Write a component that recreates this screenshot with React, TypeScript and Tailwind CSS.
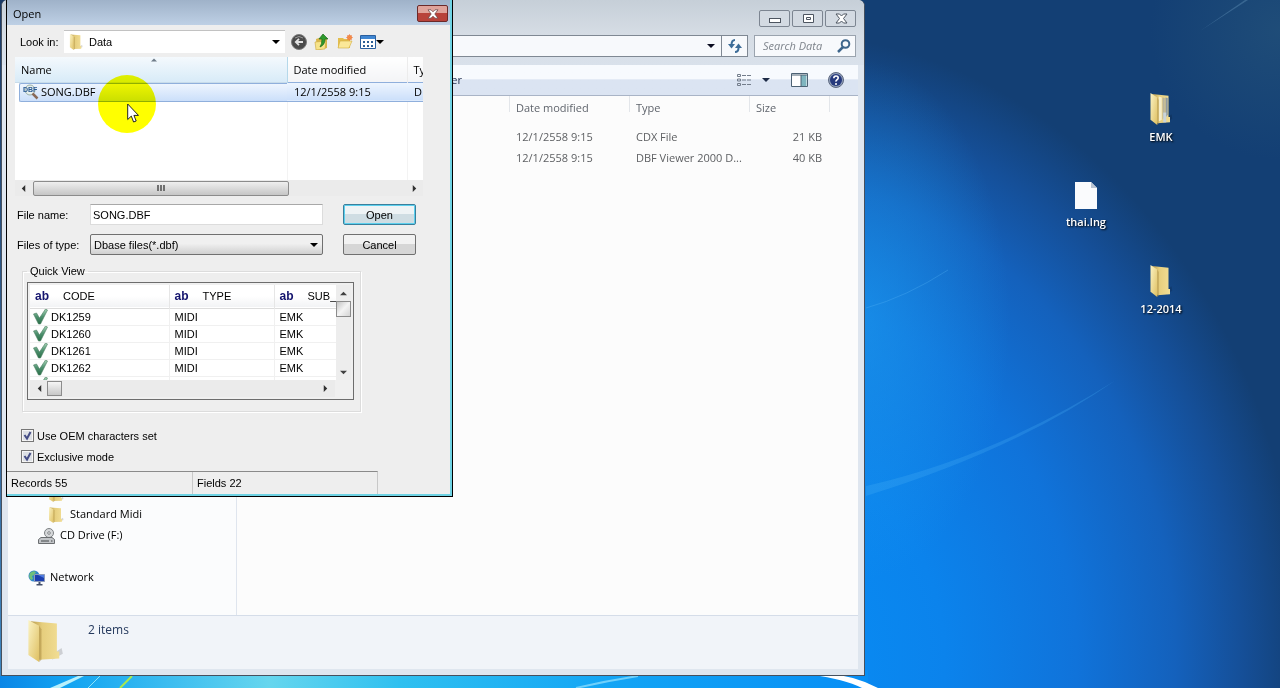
import { useState } from "react";
import type { ReactNode } from "react";
import clsx from "clsx";

const explorerFiles = [
  { modified: "12/1/2558 9:15", type: "CDX File", size: "21 KB" },
  { modified: "12/1/2558 9:15", type: "DBF Viewer 2000 D...", size: "40 KB" },
];

const records = ["DK1259", "DK1260", "DK1261", "DK1262"];

const sans = "font-['Liberation_Sans',Arial,sans-serif]";
const humanist = "font-['Open_Sans','Noto_Sans',sans-serif]";

type Direction = "up" | "down" | "left" | "right";

const arrowPaths: Record<Direction, string> = {
  up: "M0 6l4-4 4 4z",
  down: "M0 2l4 4 4-4z",
  left: "M6 0L2 4l4 4z",
  right: "M2 0l4 4-4 4z",
};

function Arrow({ direction, className }: { direction: Direction; className?: string }) {
  return (
    <svg viewBox="0 0 8 8" className={clsx("shrink-0", className)} aria-hidden="true">
      <path d={arrowPaths[direction]} fill="currentColor" />
    </svg>
  );
}

function FolderIcon({ className, full = false }: { className?: string; full?: boolean }) {
  return (
    <svg viewBox="0 0 32 36" preserveAspectRatio="none" className={clsx("shrink-0", className)} aria-hidden="true">
      <defs>
        <linearGradient id="folderFront" x1="0" y1="0" x2="1" y2="1">
          <stop offset="0" stopColor="#fbf3c4" />
          <stop offset="1" stopColor="#dfc062" />
        </linearGradient>
        <linearGradient id="folderBack" x1="0" y1="0" x2="1" y2="0">
          <stop offset="0" stopColor="#b99b4d" />
          <stop offset="0.4" stopColor="#e6ce7d" />
          <stop offset="1" stopColor="#f1dd94" />
        </linearGradient>
      </defs>
      <path d="M22 34l9-5-1-5-6 4z" fill="#000" opacity="0.15" />
      <path d="M4 1l22 2v24h2v6l-17 1z" fill="url(#folderBack)" />
      {full && (
        <>
          <path d="M13 4l4 1v25l-4 2z" fill="#f6eecb" />
          <path d="M18 5l3 .5v22l-3 2z" fill="#b9b49c" />
          <path d="M22 5l3 .5v19l-3 3z" fill="#8f9aa0" />
          <path d="M19 22h4v11h-4z" fill="#c9d4da" />
        </>
      )}
      <path d="M2 0l9 5v31l-9-6z" fill="url(#folderFront)" />
      <path d="M11 5v31l2-2V8z" fill="#a98b40" opacity="0.5" />
    </svg>
  );
}

function Wallpaper() {
  return (
    <svg
      viewBox="0 0 1280 688"
      preserveAspectRatio="none"
      className="absolute inset-0 size-full"
      aria-hidden="true"
    >
      <defs>
        <radialGradient id="sky" gradientUnits="userSpaceOnUse" cx="0" cy="0" r="1" gradientTransform="translate(780 660) scale(550 660)">
          <stop offset="0" stopColor="#078ef5" />
          <stop offset="0.3" stopColor="#0b83ec" />
          <stop offset="0.54" stopColor="#1073da" />
          <stop offset="0.72" stopColor="#1461bc" />
          <stop offset="0.84" stopColor="#154f98" />
          <stop offset="0.95" stopColor="#133f74" />
        </radialGradient>
        <radialGradient id="haze" gradientUnits="userSpaceOnUse" cx="0" cy="0" r="1" gradientTransform="translate(860 320) scale(150 260)">
          <stop offset="0" stopColor="#1c9cf0" stopOpacity="0.6" />
          <stop offset="1" stopColor="#1c9cf0" stopOpacity="0" />
        </radialGradient>
        <radialGradient id="corner" gradientUnits="userSpaceOnUse" cx="1280" cy="30" r="130">
          <stop offset="0" stopColor="#24527a" stopOpacity="0.7" />
          <stop offset="1" stopColor="#24527a" stopOpacity="0" />
        </radialGradient>
        <linearGradient id="horizon">
          <stop offset="0" stopColor="#0b86e6" />
          <stop offset="0.08" stopColor="#12a4f2" />
          <stop offset="0.31" stopColor="#66d6ee" />
          <stop offset="0.46" stopColor="#2fc0f0" />
          <stop offset="0.7" stopColor="#13a5f5" />
          <stop offset="1" stopColor="#078ef5" />
        </linearGradient>
        <linearGradient id="edge" x1="0" y1="0" x2="0" y2="1">
          <stop offset="0" stopColor="#1a3a66" />
          <stop offset="0.6" stopColor="#36679a" />
          <stop offset="1" stopColor="#3f86c0" />
        </linearGradient>
      </defs>
      <rect width="1280" height="688" fill="url(#sky)" />
      <rect x="860" width="160" height="600" fill="url(#haze)" />
      <rect x="1140" width="140" height="170" fill="url(#corner)" />
      <rect y="670" width="868" height="18" fill="url(#horizon)" />
      <rect width="8" height="676" fill="url(#edge)" />
      <path d="M1200 31l45-31h3z" fill="#7fb1d0" opacity="0.3" />
      <path d="M866 308q40-11 82-38" stroke="#58b6f4" strokeWidth="1" fill="none" opacity="0.3" />
      <path d="M866 486q130-30 250-106q-100 70-250 116z" fill="#4ab4f8" opacity="0.25" />
      <path d="M50 688l28-12h6l-24 12z" fill="#b8f0fb" />
      <path d="M88 688l12-12" stroke="#8fe4fa" strokeWidth="1" />
      <path d="M120 688l12-12" stroke="#a8e84e" strokeWidth="2" />
      <path d="M576 688q30-7 62-12" stroke="#6fd0fb" strokeWidth="2" fill="none" />
      <path d="M812 675q32 4 50 13h16q-26-14-50-13z" fill="#fff" />
    </svg>
  );
}

function DesktopIcon({ label, className, children }: { label: string; className: string; children: ReactNode }) {
  return (
    <button
      type="button"
      className={clsx(
        "absolute flex w-20 flex-col items-center gap-1 text-[11px] font-semibold text-white [text-shadow:1px_1px_2px_#000]",
        humanist,
        className
      )}
    >
      {children}
      <span className="leading-4">{label}</span>
    </button>
  );
}

function CaptionButton({ label, children }: { label: string; children: ReactNode }) {
  return (
    <button
      type="button"
      aria-label={label}
      className="flex h-[17px] w-[31px] items-center justify-center rounded-xs border border-[#7c8591] bg-[#d3dae2]"
    >
      <svg viewBox="0 0 14 11" className="h-[11px] w-[14px]" fill="#fff" stroke="#4d5560">
        {children}
      </svg>
    </button>
  );
}

function ColumnHeading({ children }: { children?: ReactNode }) {
  return (
    <th scope="col" className="font-normal">
      <div className="h-4 border-l border-[#e3e6ea] pl-1.5 leading-6">{children}</div>
    </th>
  );
}

function ExplorerWindow() {
  return (
    <section
      aria-label="Data"
      className={clsx(
        "absolute top-0 right-[415px] bottom-3 left-px flex flex-col rounded-t-md border border-t-0 border-[#46505e] bg-[#dfe6ef] px-1.5 pb-1.5 text-[11px]",
        humanist
      )}
    >
      <header className="-mx-1.5 flex h-[35px] shrink-0 items-start justify-end gap-0.5 rounded-t-md bg-linear-to-b from-[#c6cfd8] to-[#d6dde5] px-2 pt-2.5">
        <CaptionButton label="Minimize">
          <rect x="1.5" y="5.5" width="11" height="4" />
        </CaptionButton>
        <CaptionButton label="Maximize">
          <path d="M2.5 1.5h10v8h-10z" />
          <path d="M5.500 4.500h4v2h-4z" />
        </CaptionButton>
        <CaptionButton label="Close">
          <path d="M2 1h3.500l2 2 2-2H13L9.500 5.500 13 10H9.500l-2-2-2 2H2l3.500-4.500z" />
        </CaptionButton>
      </header>

      <div className="-mx-1.5 flex h-[30px] shrink-0 gap-1.5 bg-linear-to-b from-[#d6dde5] to-[#d9e1eb] pr-2 pl-1.5">
        <div className="flex h-[22px] grow border border-[#7f8893] bg-[#f7f9fc]">
          <button type="button" aria-label="Previous locations" className="ml-auto px-1.5 text-[#0a0c20]">
            <Arrow direction="down" className="size-2" />
          </button>
          <button type="button" aria-label="Refresh" className="flex w-[26px] items-center justify-center border-l border-[#7f8893]">
            <svg viewBox="0 0 16 14" className="h-3.5 w-4" fill="none" stroke="#3c6c98" strokeWidth="2">
              <path d="M8 1Q4.500 1 4.500 6" />
              <path d="M1 5h7L4.500 9.500z" fill="#3c6c98" stroke="none" />
              <path d="M8 13q3.500 0 3.500-4" />
              <path d="M8 9h7l-3.500-4.500z" fill="#3c6c98" stroke="none" />
            </svg>
          </button>
        </div>
        <label className="flex h-[22px] w-[102px] items-center border border-[#9aa3ae] bg-[#f7f9fc] pr-1 pl-2">
          <input
            type="search"
            aria-label="Search Data"
            placeholder="Search Data"
            className="w-full min-w-0 text-[11px] italic outline-none placeholder:text-[#7e848c]"
          />
          <svg viewBox="0 0 14 14" className="size-3.5 shrink-0" fill="none" stroke="#3e668c" strokeWidth="2">
            <circle cx="8.500" cy="5" r="3.800" />
            <path d="M6 8l-5 5" strokeWidth="2.500" />
          </svg>
        </label>
      </div>

      <div className="flex h-[31px] shrink-0 items-center border-b border-[#a9b4c6] bg-linear-to-b from-[#f7fafe] from-45% to-[#dbe4f2] to-50% text-[#1e2d4d]">
        <button type="button" className="w-[454px] text-right">
          New folder
        </button>
        <div className="ml-auto flex items-center pr-3.5">
          <button type="button" aria-label="Change your view" className="flex items-center gap-2.5">
            <svg viewBox="0 0 16 14" className="h-3.5 w-4" fill="none" stroke="#737d8b">
              <path d="M1.500 1.500h3v2h-3zM1.500 6h3v2h-3zM1.500 10.500h3v2h-3z" />
              <path d="M6 2.500h4M11 2.500h4M6 7h4M11 7h4M6 11.500h4M11 11.500h4" />
            </svg>
            <Arrow direction="down" className="size-2 text-[#1d2b46]" />
          </button>
          <button type="button" aria-label="Show the preview pane" className="ml-[21px]">
            <svg viewBox="0 0 17 14" className="h-3.5 w-[17px]">
              <path d="M.5.500h16v13H.5z" fill="#fff" stroke="#4d6274" />
              <path d="M10 2h5.500v11H10z" fill="#7fb5bf" />
              <path d="M1 2h15M10 2v11" stroke="#4d6274" />
            </svg>
          </button>
          <button type="button" aria-label="Get help" className="ml-5">
            <svg viewBox="0 0 16 16" className="size-4">
              <circle cx="8" cy="8" r="7.500" fill="#93a1ba" stroke="#5c6880" />
              <circle cx="8" cy="8" r="6" fill="#26397d" />
              <path d="M5.800 6.300Q5.800 4 8 4t2.200 2Q10.200 7 9 7.700T8 9.700" fill="none" stroke="#fff" strokeWidth="1.600" />
              <circle cx="8" cy="12" r="1" fill="#fff" />
            </svg>
          </button>
        </div>
      </div>

      <div className="flex min-h-0 grow">
        <nav className="flex w-[229px] shrink-0 flex-col justify-end border-r border-[#dfe5ee] bg-[#fbfcfd] pb-[27px] text-black">
          <a href="#mp3" className="flex h-[21px] items-center gap-1.5 pl-10">
            <FolderIcon className="h-4 w-4" />
            MP3
          </a>
          <a href="#standard-midi" className="flex h-[21px] items-center gap-1.5 pl-10">
            <FolderIcon className="h-4 w-4" />
            Standard Midi
          </a>
          <a href="#cd-drive" className="flex h-[21px] items-center gap-[5px] pl-[30px]">
            <svg viewBox="0 0 17 16" className="h-4 w-[17px]">
              <circle cx="11" cy="5" r="4.500" fill="#d6d8da" stroke="#7d8184" />
              <circle cx="11" cy="5" r="1.300" fill="#fff" stroke="#7d8184" />
              <path d="M3 9.500h11l2.500 2v4H.5v-4z" fill="#c2c5c8" stroke="#6b6e71" />
              <path d="M3 13h8M13 13h1.500" stroke="#44484b" />
            </svg>
            CD Drive (F:)
          </a>
          <a href="#network" className="mt-[21px] flex h-[21px] items-center gap-[5px] pl-5">
            <svg viewBox="0 0 17 16" className="h-4 w-[17px]">
              <circle cx="6" cy="6" r="5.500" fill="#2f86c8" />
              <path d="M2 3q3-3 6-1L6 5 4 6l1 3-2 1Q0 7 2 3z" fill="#6fc07a" />
              <path d="M6.500 4.500h10v7h-10z" fill="#1c3fb0" stroke="#8d9bb8" />
              <path d="M10 5h6v3z" fill="#4f7be0" />
              <path d="M10.500 12h2v2h2v1.500h-6V14h2z" fill="#44506c" />
            </svg>
            Network
          </a>
        </nav>

        <div className="grow bg-[#fcfcfc]">
          <table className="w-full table-fixed text-[#5e6063]">
            <colgroup>
              <col className="w-[272px]" />
              <col className="w-[120px]" />
              <col className="w-[120px]" />
              <col className="w-20" />
              <col />
            </colgroup>
            <thead>
              <tr className="h-[31px] text-left align-top text-[#60656d]">
                <th scope="col" aria-label="Name" />
                <ColumnHeading>Date modified</ColumnHeading>
                <ColumnHeading>Type</ColumnHeading>
                <ColumnHeading>Size</ColumnHeading>
                <ColumnHeading />
              </tr>
            </thead>
            <tbody>
              {explorerFiles.map((file) => (
                <tr key={file.type} className="h-[21px]">
                  <td />
                  <td className="pl-[7px]">{file.modified}</td>
                  <td className="pl-[7px] whitespace-nowrap">{file.type}</td>
                  <td className="pr-[7px] text-right">{file.size}</td>
                  <td />
                </tr>
              ))}
            </tbody>
          </table>
        </div>
      </div>

      <footer className="flex h-[54px] shrink-0 items-start gap-6 border-t border-[#d5dde9] bg-[#f1f4f9] pl-[18px] text-[#263a5e]">
        <FolderIcon className="mt-1 h-[42px] w-[38px]" />
        <p className="text-xs leading-7">2 items</p>
      </footer>
    </section>
  );
}

function CheckMark({ className }: { className?: string }) {
  return (
    <svg viewBox="0 0 16 16" className={clsx("shrink-0", className)} aria-hidden="true">
      <defs>
        <linearGradient id="tick" x1="0" y1="0" x2="0" y2="1">
          <stop offset="0" stopColor="#a6d3b6" />
          <stop offset="0.5" stopColor="#4f9270" />
          <stop offset="1" stopColor="#2a6f49" />
        </linearGradient>
      </defs>
      <path d="M1 5l3-1 3 5 6-9 2 1-7 14H6z" fill="url(#tick)" stroke="#4c7f62" strokeWidth="0.600" />
    </svg>
  );
}

function FieldHeader({ name, className }: { name: string; className?: string }) {
  return (
    <th scope="col" className={clsx("overflow-hidden font-normal whitespace-nowrap", className)}>
      <span className="mr-3.5 text-xs font-bold text-[#14146e]">ab</span>
      {name}
    </th>
  );
}

function QuickView() {
  return (
    <fieldset className="ml-[7px] w-[339px] border border-[#dcdcdc] pr-1.5 pb-[11px] pl-1 shadow-[1px_1px_#fff,inset_1px_1px_#fff]">
      <legend className="px-[3px] leading-[14px]">Quick View</legend>
      <div className="mt-1 border border-[#6d6d6d] bg-[#f0f0f0] p-0.5">
        <div className="flex">
          <div className="h-[95px] min-w-0 grow overflow-hidden bg-white">
            <table className="w-full table-fixed text-left">
              <colgroup>
                <col className="w-[139px]" />
                <col className="w-[105px]" />
                <col />
              </colgroup>
              <thead>
                <tr className="h-[23px] border-b border-[#dcdcdc] bg-linear-to-b from-white from-50% to-[#f2f3f5]">
                  <FieldHeader name="CODE" className="pl-[5px]" />
                  <FieldHeader name="TYPE" className="border-l border-[#e6e6e6] pl-[5px]" />
                  <FieldHeader name="SUB_" className="border-l border-[#e6e6e6] pl-[5px]" />
                </tr>
              </thead>
              <tbody>
                {records.map((code) => (
                  <tr key={code} className="h-[17px] border-b border-[#f0f0f0]">
                    <td className="pl-0.5">
                      <span className="flex h-4 items-center gap-0.5">
                        <CheckMark className="h-4 w-[17px]" />
                        {code}
                      </span>
                    </td>
                    <td className="border-l border-[#f0f0f0] pl-[5px]">MIDI</td>
                    <td className="border-l border-[#f0f0f0] pl-[5px]">EMK</td>
                  </tr>
                ))}
                <tr>
                  <td className="pl-0.5">
                    <CheckMark className="h-4 w-[17px]" />
                  </td>
                  <td className="border-l border-[#f0f0f0]" />
                  <td className="border-l border-[#f0f0f0]" />
                </tr>
              </tbody>
            </table>
          </div>
          <div className="flex w-4 flex-col items-center bg-[#ededed] pt-[5px] pb-1 text-[#404040]">
            <button type="button" aria-label="Scroll up">
              <Arrow direction="up" className="mb-1 size-[7px]" />
            </button>
            <div className="h-4 w-[15px] border border-[#8c8c8c] bg-linear-to-br from-[#c4c4c4] via-[#f4f4f4] to-[#d4d4d4]" />
            <button type="button" aria-label="Scroll down" className="mt-auto">
              <Arrow direction="down" className="size-[7px]" />
            </button>
          </div>
        </div>
        <div className="mr-4 flex h-[17px] items-center bg-[#ebebeb] px-1.5 text-[#303030]">
          <button type="button" aria-label="Scroll left" className="mr-1">
            <Arrow direction="left" className="size-[7px]" />
          </button>
          <div className="h-[15px] w-[15px] border border-[#8c8c8c] bg-linear-to-b from-[#f6f6f6] to-[#c8c8c8]" />
          <button type="button" aria-label="Scroll right" className="ml-auto">
            <Arrow direction="right" className="size-[7px]" />
          </button>
        </div>
      </div>
    </fieldset>
  );
}

function CheckOption({ label }: { label: string }) {
  const [checked, setChecked] = useState(true);

  return (
    <label className="flex h-[21px] items-center gap-[3px]">
      <span className="grid">
        <input
          type="checkbox"
          checked={checked}
          onChange={(e) => setChecked(e.target.checked)}
          className="col-start-1 row-start-1 size-[13px] appearance-none border border-[#767676] bg-[#dde0e5] shadow-[inset_0_0_0_1px_#f6f6f6]"
        />
        {checked && (
          <svg viewBox="0 0 13 13" className="pointer-events-none col-start-1 row-start-1 size-[13px]">
            <path d="M3.500 6l2.500 3.500L9.500 3" fill="none" stroke="#454d86" strokeWidth="2" />
          </svg>
        )}
      </span>
      {label}
    </label>
  );
}

function OpenDialog() {
  const [fileName, setFileName] = useState("SONG.DBF");

  return (
    <section
      role="dialog"
      aria-label="Open"
      className={clsx(
        "absolute top-0 left-1.5 w-[447px] border border-t-0 border-black bg-[#eee] text-[11px] leading-[14px] text-black",
        sans
      )}
    >
      <div className="border-r-2 border-b-2 border-[#6fd3e4]">
        <header className="flex h-[25px] items-center justify-between bg-linear-to-b from-[#9fb2c9] to-[#bed0e5] pt-0.5 pr-0.5 pl-1.5">
          <h1 className={humanist}>Open</h1>
          <button
            type="button"
            aria-label="Close"
            className="flex h-[17px] w-[31px] items-center justify-center rounded-xs border border-[#6b2a2a] bg-linear-to-b from-[#e0a39b] from-45% to-[#b8423a] to-50%"
          >
            <svg viewBox="0 0 12 10" className="h-2.5 w-3" fill="#fff" stroke="#6d4a4a" strokeWidth="0.800">
              <path d="M1 .8h3l2 2 2-2h3L7.800 5 11 9.200H8l-2-2-2 2H1L4.200 5z" />
            </svg>
          </button>
        </header>

        <div className="pt-[5px] pl-2">
          <div className="flex h-[23px] items-center">
            <label htmlFor="look-in" className="w-[49px] pl-[5px]">Look in:</label>
            <div className="flex h-[23px] w-[221px] items-center border-t border-[#c2c2c2] bg-white pr-[5px] pl-[5px]">
              <FolderIcon className="mr-1.5 h-4 w-[14px]" />
              <select id="look-in" className="grow appearance-none outline-none">
                <option>Data</option>
              </select>
              <Arrow direction="down" className="pointer-events-none size-2" />
            </div>
            <div className="flex items-center gap-[7px] pl-1.5">
              <button type="button" aria-label="Back">
                <svg viewBox="0 0 16 16" className="size-4">
                  <circle cx="8" cy="8" r="7.500" fill="#4b4b4b" stroke="#7d7d7d" />
                  <path d="M4 4q4-3 8 0" stroke="#9a9a9a" fill="none" />
                  <path d="M12 8H5M8 4.800L4.800 8 8 11.200" stroke="#e4e4e4" strokeWidth="1.800" fill="none" />
                </svg>
              </button>
              <button type="button" aria-label="Up one level">
                <svg viewBox="0 0 16 16" className="size-4">
                  <path d="M2 5l3-1 1 1h7v9l-10 2z" fill="#d9b64a" />
                  <path d="M1 8l11-1-1 8-9 1z" fill="#f7e38a" stroke="#c9a640" strokeWidth="0.600" />
                  <path d="M9 0l5 5h-3q0 6-5 8 2-3 2-8H5z" fill="#2d9a2d" stroke="#1b6b1b" strokeWidth="0.700" />
                </svg>
              </button>
              <button type="button" aria-label="Create new folder">
                <svg viewBox="0 0 16 16" className="size-4">
                  <path d="M1 4h5l1 1h6v9H1z" fill="#e3be4e" />
                  <path d="M3 7h12l-3 7H1z" fill="#fbe898" stroke="#d2ab3e" strokeWidth="0.600" />
                  <circle cx="12.500" cy="3.500" r="2" fill="#ffb43c" stroke="#f07a3a" />
                  <path d="M12.500 0v7M9 3.500h7M10 1l5 5M15 1l-5 5" stroke="#ee7c4a" strokeWidth="0.600" />
                </svg>
              </button>
              <button type="button" aria-label="View menu" className="flex items-center">
                <svg viewBox="0 0 16 14" className="h-3.5 w-4">
                  <path d="M.5.500h15v13H.5z" fill="#fff" stroke="#2a5f9e" />
                  <path d="M1 1h14v3H1z" fill="#3f86d2" />
                  <path d="M3 6h2v2H3zM7 6h2v2H7zM11 6h2v2h-2zM3 10h2v2H3zM7 10h2v2H7zM11 10h2v2h-2z" fill="#2c5f96" />
                </svg>
                <Arrow direction="down" className="size-2" />
              </button>
            </div>
          </div>

          {/* File list */}
          <div className="mt-1 w-[408px] overflow-hidden bg-white">
            <div className="h-[123px]">
              <table className={clsx("w-full table-fixed text-left whitespace-nowrap", humanist)}>
                <colgroup>
                  <col className="w-[272px]" />
                  <col className="w-[120px]" />
                  <col />
                </colgroup>
                <thead>
                  <tr className="h-[25px] border-b border-[#c8dcea] align-top">
                    <th scope="col" className="border-r border-[#b5d8ea] bg-linear-to-b from-[#f4f9fd] to-[#d8ebf8] pl-1.5 font-normal">
                      <Arrow direction="up" className="mx-auto h-1.5 w-2 text-[#6e7b88]" />
                      <span className="block leading-[14px]">Name</span>
                    </th>
                    <th scope="col" className="border-r border-[#ececec] bg-linear-to-b from-white to-[#f3f4f6] pt-1.5 pl-1.5 leading-[14px] font-normal">
                      Date modified
                    </th>
                    <th scope="col" className="overflow-hidden bg-linear-to-b from-white to-[#f3f4f6] pt-1.5 pl-1.5 leading-[14px] font-normal">
                      Type
                    </th>
                  </tr>
                </thead>
                <tbody>
                  <tr className="h-[19px]">
                    <td className="pl-1">
                      <span className="flex h-[19px] items-center gap-0.5 rounded-l-xs border border-r-0 border-[#8fafdc] bg-linear-to-b from-[#eef5fe] to-[#cbdffa] pl-0.5">
                        <svg viewBox="0 0 17 16" className="h-4 w-[17px]">
                          <circle cx="8" cy="6" r="5" fill="#e8f0ee" stroke="#9ab0a8" />
                          <path d="M10.500 9.500l5 5" stroke="#8a6a58" strokeWidth="2.500" />
                          <text x="1" y="8" fontSize="7" fontWeight="bold" fill="#2a5a94" fontFamily="Liberation Sans">DBF</text>
                        </svg>
                        SONG.DBF
                      </span>
                    </td>
                    <td className="border-y border-[#8fafdc] bg-linear-to-b from-[#eef5fe] to-[#cbdffa] pl-[7px]">12/1/2558 9:15</td>
                    <td className="overflow-hidden border-y border-[#8fafdc] bg-linear-to-b from-[#eef5fe] to-[#cbdffa] pl-[7px]">DBF</td>
                  </tr>
                  <tr className="h-20">
                    <td className="border-r border-[#f3f3f3]" />
                    <td className="border-r border-[#f3f3f3]" />
                    <td />
                  </tr>
                </tbody>
              </table>
            </div>
            <div className="flex h-4 items-center bg-[#ebebeb] px-[5px] text-[#303030]">
              <button type="button" aria-label="Scroll left" className="mr-1.5">
                <Arrow direction="left" className="size-[7px]" />
              </button>
              <div className="flex h-[15px] w-[256px] items-center justify-center gap-px rounded-xs border border-[#8c8c8c] bg-linear-to-b from-[#efefef] to-[#c6c6c6]">
                <span className="h-1.5 w-0.5 bg-[#707070]" />
                <span className="h-1.5 w-0.5 bg-[#707070]" />
                <span className="h-1.5 w-0.5 bg-[#707070]" />
              </div>
              <button type="button" aria-label="Scroll right" className="ml-auto">
                <Arrow direction="right" className="size-[7px]" />
              </button>
            </div>
          </div>

          <div className="mt-2 grid grid-cols-[73px_235px_93px] items-center gap-y-[9px]">
            <label htmlFor="file-name" className="pl-0.5">File name:</label>
            <input
              id="file-name"
              value={fileName}
              onChange={(e) => setFileName(e.target.value)}
              className="ml-0.5 h-[21px] border border-[#dcdcdc] border-t-[#a8a8a8] bg-white px-0.5 outline-none"
            />
            <button type="button" className="ml-5 h-[21px] w-[73px] rounded-xs border border-[#3a7f9c] bg-linear-to-b from-[#eef3f5] from-45% to-[#cfdde3] to-50% shadow-[inset_0_0_0_1px_#5cd0ee]">
              Open
            </button>
            <label htmlFor="file-type" className="pl-0.5">Files of type:</label>
            <div className="ml-0.5 flex h-[21px] items-center rounded-xs border border-[#707070] bg-linear-to-b from-[#f0f0f0] from-45% to-[#d0d0d0] pr-1 pl-[3px]">
              <select id="file-type" className="grow appearance-none outline-none">
                <option>Dbase files(*.dbf)</option>
              </select>
              <Arrow direction="down" className="pointer-events-none size-2" />
            </div>
            <button type="button" className="ml-5 h-[21px] w-[73px] rounded-xs border border-[#707070] bg-linear-to-b from-[#f2f2f2] from-45% to-[#d6d6d6] to-50%">
              Cancel
            </button>
          </div>

          <div className="mt-[9px]">
            <QuickView />
          </div>

          <div className="mt-[13px] pl-1.5">
            <CheckOption label="Use OEM characters set" />
            <CheckOption label="Exclusive mode" />
          </div>
        </div>

        <footer className="mt-1 flex h-[23px] w-[371px] items-center border-t border-r border-t-[#8a8a8a] border-r-[#c8c8c8] pl-1">
          <p className="w-[181px]">Records 55</p>
          <p className="flex h-full items-center border-l border-[#c8c8c8] pl-1">Fields 22</p>
        </footer>
      </div>
    </section>
  );
}

// Yellow click highlight with the arrow pointer over it
function Pointer() {
  return (
    <>
      <div className="pointer-events-none absolute top-[75px] left-[98px] size-[58px] rounded-full bg-[#ffff00] mix-blend-multiply" />
      <svg viewBox="0 0 12 20" className="pointer-events-none absolute top-[103px] left-[127px] h-5 w-3" aria-hidden="true">
        <path d="M.7 1v15.500l3.600-3.400L6.600 19l2.600-1-2.300-5.600h4.600z" fill="#fff" stroke="#222" />
      </svg>
    </>
  );
}

export default function App() {
  return (
    <main className="relative h-screen w-full overflow-hidden bg-[#133f74]">
      <Wallpaper />
      <DesktopIcon label="EMK" className="top-[93px] right-[79px]">
        <FolderIcon full className="h-8 w-6" />
      </DesktopIcon>
      <DesktopIcon label="thai.lng" className="top-[182px] right-[154px]">
        <svg viewBox="0 0 22 28" className="h-7 w-[22px]">
          <path d="M0 0h16l6 6v21H0z" fill="#fafbfd" />
          <path d="M16 0v6h6z" fill="#b9c4d2" />
        </svg>
      </DesktopIcon>
      <DesktopIcon label="12-2014" className="top-[265px] right-[79px]">
        <FolderIcon className="h-8 w-6" />
      </DesktopIcon>
      <ExplorerWindow />
      <OpenDialog />
      <Pointer />
    </main>
  );
}
